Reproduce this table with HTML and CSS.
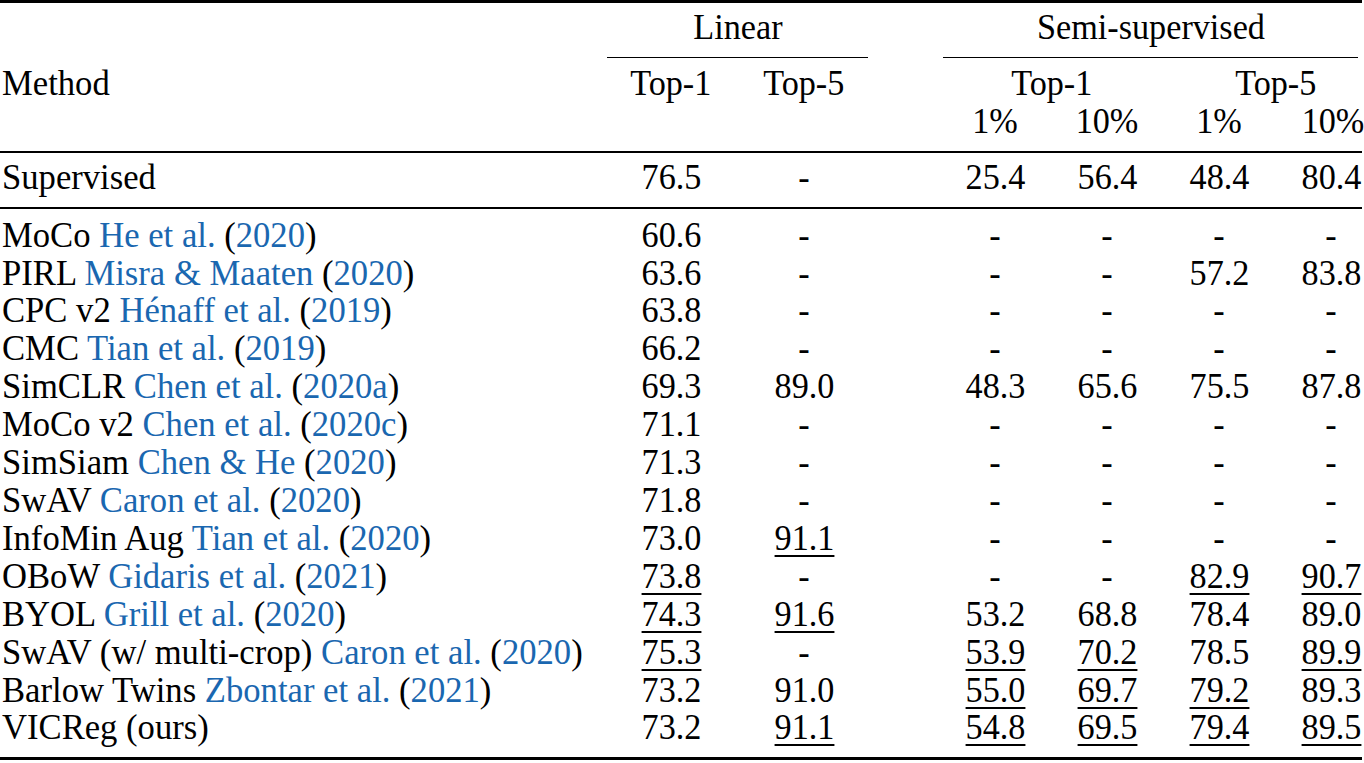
FILE: index.html
```html
<!DOCTYPE html>
<html>
<head>
<meta charset="utf-8">
<link rel="stylesheet" href="styles.css">
</head>
<body>
<table class="results">
  <colgroup>
    <col class="c-method">
    <col class="c-lt1">
    <col class="c-lt5">
    <col class="c-gap">
    <col class="c-s1">
    <col class="c-s2">
    <col class="c-s3">
    <col class="c-s4">
  </colgroup>
  <thead>
    <tr class="h1">
      <th></th>
      <th colspan="2"><div class="cmid lin"><span class="t">Linear</span></div></th>
      <th></th>
      <th colspan="4"><div class="cmid semi"><span class="t">Semi-supervised</span></div></th>
    </tr>
    <tr class="h2">
      <th class="method"><span class="t">Method</span></th>
      <th><span class="t">Top-1</span></th>
      <th><span class="t">Top-5</span></th>
      <th></th>
      <th colspan="2"><span class="t">Top-1</span></th>
      <th colspan="2" class="last"><span class="t">Top-5</span></th>
    </tr>
    <tr class="h3">
      <th></th>
      <th></th>
      <th></th>
      <th></th>
      <th><span class="t">1%</span></th>
      <th><span class="t">10%</span></th>
      <th><span class="t">1%</span></th>
      <th class="last"><span class="t">10%</span></th>
    </tr>
  </thead>
  <tbody class="sup">
    <tr>
      <td class="method"><span class="t">Supervised</span></td>
      <td><span class="t">76.5</span></td><td><span class="t">-</span></td><td></td><td><span class="t">25.4</span></td><td><span class="t">56.4</span></td><td><span class="t">48.4</span></td><td class="last"><span class="t">80.4</span></td>
    </tr>
  </tbody>
  <tbody class="main">
    <tr>
      <td class="method"><span class="t">MoCo <span class="cite">He et al.</span> (<span class="cite">2020</span>)</span></td>
      <td><span class="t">60.6</span></td><td><span class="t">-</span></td><td></td><td><span class="t">-</span></td><td><span class="t">-</span></td><td><span class="t">-</span></td><td class="last"><span class="t">-</span></td>
    </tr>
    <tr>
      <td class="method"><span class="t">PIRL <span class="cite">Misra &amp; Maaten</span> (<span class="cite">2020</span>)</span></td>
      <td><span class="t">63.6</span></td><td><span class="t">-</span></td><td></td><td><span class="t">-</span></td><td><span class="t">-</span></td><td><span class="t">57.2</span></td><td class="last"><span class="t">83.8</span></td>
    </tr>
    <tr>
      <td class="method"><span class="t">CPC v2 <span class="cite">Hénaff et al.</span> (<span class="cite">2019</span>)</span></td>
      <td><span class="t">63.8</span></td><td><span class="t">-</span></td><td></td><td><span class="t">-</span></td><td><span class="t">-</span></td><td><span class="t">-</span></td><td class="last"><span class="t">-</span></td>
    </tr>
    <tr>
      <td class="method"><span class="t">CMC <span class="cite">Tian et al.</span> (<span class="cite">2019</span>)</span></td>
      <td><span class="t">66.2</span></td><td><span class="t">-</span></td><td></td><td><span class="t">-</span></td><td><span class="t">-</span></td><td><span class="t">-</span></td><td class="last"><span class="t">-</span></td>
    </tr>
    <tr>
      <td class="method"><span class="t">SimCLR <span class="cite">Chen et al.</span> (<span class="cite">2020a</span>)</span></td>
      <td><span class="t">69.3</span></td><td><span class="t">89.0</span></td><td></td><td><span class="t">48.3</span></td><td><span class="t">65.6</span></td><td><span class="t">75.5</span></td><td class="last"><span class="t">87.8</span></td>
    </tr>
    <tr>
      <td class="method"><span class="t">MoCo v2 <span class="cite">Chen et al.</span> (<span class="cite">2020c</span>)</span></td>
      <td><span class="t">71.1</span></td><td><span class="t">-</span></td><td></td><td><span class="t">-</span></td><td><span class="t">-</span></td><td><span class="t">-</span></td><td class="last"><span class="t">-</span></td>
    </tr>
    <tr>
      <td class="method"><span class="t">SimSiam <span class="cite">Chen &amp; He</span> (<span class="cite">2020</span>)</span></td>
      <td><span class="t">71.3</span></td><td><span class="t">-</span></td><td></td><td><span class="t">-</span></td><td><span class="t">-</span></td><td><span class="t">-</span></td><td class="last"><span class="t">-</span></td>
    </tr>
    <tr>
      <td class="method"><span class="t">SwAV <span class="cite">Caron et al.</span> (<span class="cite">2020</span>)</span></td>
      <td><span class="t">71.8</span></td><td><span class="t">-</span></td><td></td><td><span class="t">-</span></td><td><span class="t">-</span></td><td><span class="t">-</span></td><td class="last"><span class="t">-</span></td>
    </tr>
    <tr>
      <td class="method"><span class="t">InfoMin Aug <span class="cite">Tian et al.</span> (<span class="cite">2020</span>)</span></td>
      <td><span class="t">73.0</span></td><td><span class="t"><u>91.1</u></span></td><td></td><td><span class="t">-</span></td><td><span class="t">-</span></td><td><span class="t">-</span></td><td class="last"><span class="t">-</span></td>
    </tr>
    <tr>
      <td class="method"><span class="t">OBoW <span class="cite">Gidaris et al.</span> (<span class="cite">2021</span>)</span></td>
      <td><span class="t"><u>73.8</u></span></td><td><span class="t">-</span></td><td></td><td><span class="t">-</span></td><td><span class="t">-</span></td><td><span class="t"><u>82.9</u></span></td><td class="last"><span class="t"><u>90.7</u></span></td>
    </tr>
    <tr>
      <td class="method"><span class="t">BYOL <span class="cite">Grill et al.</span> (<span class="cite">2020</span>)</span></td>
      <td><span class="t"><u>74.3</u></span></td><td><span class="t"><u>91.6</u></span></td><td></td><td><span class="t">53.2</span></td><td><span class="t">68.8</span></td><td><span class="t">78.4</span></td><td class="last"><span class="t">89.0</span></td>
    </tr>
    <tr>
      <td class="method"><span class="t">SwAV (w/ multi-crop) <span class="cite">Caron et al.</span> (<span class="cite">2020</span>)</span></td>
      <td><span class="t"><u>75.3</u></span></td><td><span class="t">-</span></td><td></td><td><span class="t"><u>53.9</u></span></td><td><span class="t"><u>70.2</u></span></td><td><span class="t">78.5</span></td><td class="last"><span class="t"><u>89.9</u></span></td>
    </tr>
    <tr>
      <td class="method"><span class="t">Barlow Twins <span class="cite">Zbontar et al.</span> (<span class="cite">2021</span>)</span></td>
      <td><span class="t">73.2</span></td><td><span class="t">91.0</span></td><td></td><td><span class="t"><u>55.0</u></span></td><td><span class="t"><u>69.7</u></span></td><td><span class="t"><u>79.2</u></span></td><td class="last"><span class="t">89.3</span></td>
    </tr>
    <tr>
      <td class="method"><span class="t">VICReg (ours)</span></td>
      <td><span class="t">73.2</span></td><td><span class="t"><u>91.1</u></span></td><td></td><td><span class="t"><u>54.8</u></span></td><td><span class="t"><u>69.5</u></span></td><td><span class="t"><u>79.4</u></span></td><td class="last"><span class="t"><u>89.5</u></span></td>
    </tr>
  </tbody>
</table>
</body>
</html>
```

FILE: styles.css
```css
html, body {
  margin: 0;
  padding: 0;
  background: #ffffff;
}

.results {
  width: 1362px;
  table-layout: fixed;
  border-collapse: separate;
  border-spacing: 0;
  border-top: 3px solid #000;
  border-bottom: 3px solid #000;
  font-family: "Liberation Serif", "Times New Roman", serif;
  font-size: 36px;
  line-height: 37.9px;
  color: #000;
}

.c-method { width: 603px; }
.c-lt1 { width: 136px; }
.c-lt5 { width: 130px; }
.c-gap { width: 71px; }
.c-s1 { width: 110px; }
.c-s2 { width: 114px; }
.c-s3 { width: 110px; }
.c-s4 { width: 88px; }

.results th,
.results td {
  padding: 0;
  font-weight: normal;
  text-align: center;
  white-space: nowrap;
}

/* the source type is a slightly condensed Times */
.t {
  display: inline-block;
  transform: scaleX(0.95);
  transform-origin: 50% 50%;
}

.results .method {
  text-align: left;
  padding-left: 2px;
}

.results .method .t {
  transform: scaleX(0.962);
  transform-origin: 0 50%;
}

.results .last {
  padding-left: 26px;
}

.h1 th {
  padding-top: 6px;
}

.cmid {
  padding-bottom: 10px;
  border-bottom: 1px solid #000;
}

.cmid.lin {
  margin: 0 1px 0 4px;
}

.cmid.semi {
  margin: 0 4px 0 3px;
}

.h2 th {
  padding-top: 7px;
}

.h3 th {
  padding-bottom: 10px;
}

.sup td {
  border-top: 2px solid #000;
  padding-top: 6px;
  padding-bottom: 10px;
}

.main tr:first-child td {
  border-top: 2px solid #000;
  padding-top: 8px;
}

.main tr:last-child td {
  padding-bottom: 10px;
}

.cite {
  color: #1a67b0;
}

u {
  text-decoration: underline;
  text-decoration-thickness: 1.5px;
  text-underline-offset: 5px;
}
```
